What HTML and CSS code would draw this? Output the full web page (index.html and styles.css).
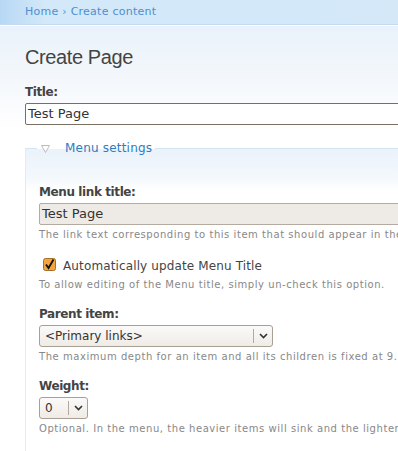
FILE: index.html
```html
<html>
<head>
	<link rel="stylesheet" href="styles.css">
</head>
<body>
	<div class='header'>
		<div class='breadcrumb'><a href='#'>Home</a> › <a href='#'>Create content</a></div>
	</div>

	<div class='main'>
		<h1>Create Page</h1>

		<div class='form-item first'>
			<label>Title:</label>
			<div class='input title'>Test Page</div>
		</div>

		<fieldset class='menu'>
			<legend>
				<svg class='toggle' width='9' height='8' viewBox='0 0 9 8'><path d='M0.5 0.5 L8.5 0.5 L4.5 7.5 Z' fill='#fff' stroke='#b9bcc0' stroke-width='1'/></svg><a href='#'>Menu settings</a>
			</legend>

			<div class='form-item'>
				<label>Menu link title:</label>
				<div class='input disabled'>Test Page</div>
				<div class='description'>The link text corresponding to this item that should appear in the menu. Leave blank if you do not wish to add this post to the menu.</div>
			</div>

			<div class='form-item check'>
				<div class='checkline'>
					<svg class='checkbox' width='13' height='13' viewBox='0 0 13 13'>
						<rect x='0.5' y='0.5' width='12' height='12' rx='2' fill='#f2a53d' stroke='#a8702a'/>
						<path d='M3 6.5 L5.5 10 L10.5 1.5' fill='none' stroke='#111' stroke-width='1.8'/>
					</svg>
					<span>Automatically update Menu Title</span>
				</div>
				<div class='description'>To allow editing of the Menu title, simply un-check this option.</div>
			</div>

			<div class='form-item'>
				<label>Parent item:</label>
				<div class='select parent'>
					<span class='value'>&lt;Primary links&gt;</span>
					<span class='arrow'><svg width='9' height='6' viewBox='0 0 9 6'><path d='M1 1 L4.5 4.5 L8 1' fill='none' stroke='#333' stroke-width='1.6'/></svg></span>
				</div>
				<div class='description'>The maximum depth for an item and all its children is fixed at 9. Some menu items may not be available as parents if selecting them would exceed this limit.</div>
			</div>

			<div class='form-item'>
				<label>Weight:</label>
				<div class='select weight'>
					<span class='value'>0</span>
					<span class='arrow'><svg width='9' height='6' viewBox='0 0 9 6'><path d='M1 1 L4.5 4.5 L8 1' fill='none' stroke='#333' stroke-width='1.6'/></svg></span>
				</div>
				<div class='description'>Optional. In the menu, the heavier items will sink and the lighter items will be positioned nearer the top.</div>
			</div>
		</fieldset>
	</div>
</body>
</html>
```

FILE: styles.css
```css
html, body {
	margin: 0;
	padding: 0;
	overflow: hidden;
}
body {
	font-family: 'DejaVu Sans', sans-serif;
	font-size: 12px;
	color: #444;
	background: linear-gradient(to bottom, #e9f2fa 0, #e9f2fa 28px, #f5f8fc 85px, #fff 130px);
	width: 398px;
	height: 451px;
}
a {
	text-decoration: none;
}

.header {
	height: 24px;
	background: linear-gradient(to right, #b7d8f4 0, #d3e8f8 45px, #d4e8f8 100%);
	border-bottom: 1px solid #c3daf2;
	box-shadow: 0 1px 0 #fff;
}
.breadcrumb {
	padding: 5px 0 0 25px;
	font-size: 11px;
	line-height: 14px;
	letter-spacing: 0.25px;
	color: #5b96cf;
	white-space: nowrap;
}
.breadcrumb a {
	color: #4e8fd0;
}

.main {
	padding-left: 25px;
	width: 460px;
}
h1 {
	font-family: 'Liberation Sans', Arial, sans-serif;
	font-weight: normal;
	font-size: 20px;
	letter-spacing: -0.4px;
	line-height: 24px;
	color: #444;
	margin: 20px 0 0 0;
}

.form-item {
	margin-top: 15px;
}
.form-item.first {
	margin-top: 16px;
}
label {
	display: block;
	font-weight: bold;
	letter-spacing: -0.4px;
	line-height: 15px;
	color: #444;
	margin-bottom: 3px;
}
.input {
	height: 20px;
	line-height: 20px;
	font-size: 13px;
	border: 1px solid #7b6f61;
	border-radius: 2px;
	background: #fff;
	padding: 0 2px;
	color: #333;
	white-space: nowrap;
}
.input.disabled {
	background: #eeeae5;
	border-color: #b3aaa0;
}
.description {
	font-size: 10px;
	line-height: 14px;
	color: #888;
	letter-spacing: 0.55px;
	white-space: nowrap;
	margin-top: 3px;
}

fieldset.menu {
	margin: 16px 0 0 0;
	padding: 29px 13px 20px 13px;
	border: none;
	border-top: 1px solid #d3e4f3;
	border-left: 1px solid #e1ecf6;
	background: linear-gradient(to bottom, #eaf2fa 0, #f3f8fc 28px, #fff 42px);
}
fieldset.menu legend {
	padding: 0 3px 0 4px;
	margin-left: -2px;
	line-height: 15px;
	letter-spacing: 0.2px;
	display: flex;
	align-items: center;
}
fieldset.menu legend .toggle {
	margin-right: 15px;
}
fieldset.menu legend a {
	color: #2b7cc2;
}
fieldset.menu .form-item:first-of-type {
	margin-top: 0;
}

.check {
	margin-top: 13px;
}
.checkline {
	display: flex;
	align-items: center;
	height: 18px;
}
.checkline .checkbox {
	margin: 0 7px 0 4px;
}
.checkline span {
	color: #444;
	letter-spacing: 0.13px;
	padding-top: 3px;
}
.check .description {
	margin-top: 5px;
}

.select {
	display: flex;
	align-items: center;
	height: 20px;
	border: 1px solid #a89f95;
	border-radius: 3px;
	background: linear-gradient(to bottom, #fbfaf9 0, #efebe6 100%);
	color: #333;
}
.select.parent {
	width: 232px;
}
.select.weight {
	width: 47px;
}
.select .value {
	flex: 1;
	padding-left: 5px;
	white-space: nowrap;
}
.select .arrow {
	width: 18px;
	height: 14px;
	border-left: 1px solid #b1a89e;
	display: flex;
	align-items: center;
	justify-content: center;
}
```
